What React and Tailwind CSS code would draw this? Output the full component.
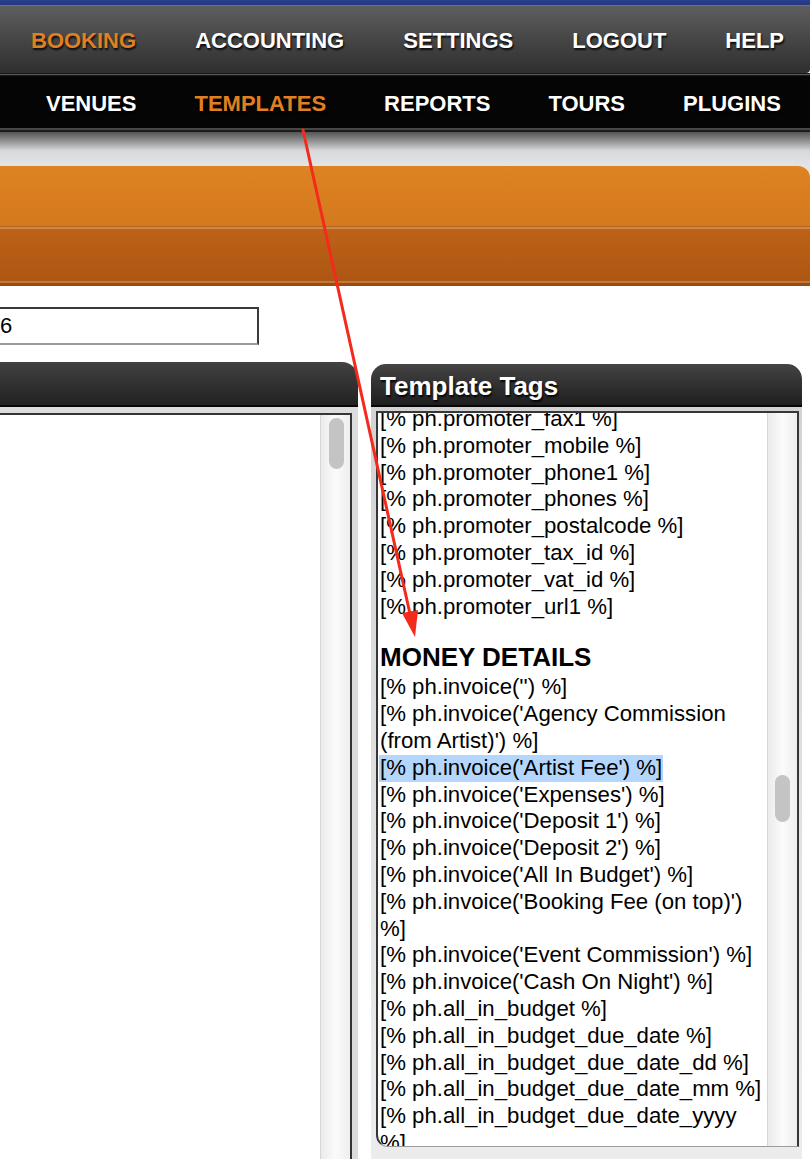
import React from "react";

const topNav = [
  { label: "BOOKING", active: true },
  { label: "ACCOUNTING" },
  { label: "SETTINGS" },
  { label: "LOGOUT" },
  { label: "HELP" },
];

const subNav = [
  { label: "VENUES" },
  { label: "TEMPLATES", active: true },
  { label: "REPORTS" },
  { label: "TOURS" },
  { label: "PLUGINS" },
];

const promoterTags = [
  "[% ph.promoter_fax1 %]",
  "[% ph.promoter_mobile %]",
  "[% ph.promoter_phone1 %]",
  "[% ph.promoter_phones %]",
  "[% ph.promoter_postalcode %]",
  "[% ph.promoter_tax_id %]",
  "[% ph.promoter_vat_id %]",
  "[% ph.promoter_url1 %]",
];

const moneyTags = [
  { t: "[% ph.invoice('') %]" },
  { t: "[% ph.invoice('Agency Commission" },
  { t: "(from Artist)') %]" },
  { t: "[% ph.invoice('Artist Fee') %]", hl: true },
  { t: "[% ph.invoice('Expenses') %]" },
  { t: "[% ph.invoice('Deposit 1') %]" },
  { t: "[% ph.invoice('Deposit 2') %]" },
  { t: "[% ph.invoice('All In Budget') %]" },
  { t: "[% ph.invoice('Booking Fee (on top)')" },
  { t: "%]" },
  { t: "[% ph.invoice('Event Commission') %]" },
  { t: "[% ph.invoice('Cash On Night') %]" },
  { t: "[% ph.all_in_budget %]" },
  { t: "[% ph.all_in_budget_due_date %]" },
  { t: "[% ph.all_in_budget_due_date_dd %]" },
  { t: "[% ph.all_in_budget_due_date_mm %]" },
  { t: "[% ph.all_in_budget_due_date_yyyy" },
  { t: "%]" },
];

function NavItem({ label, active }) {
  return (
    <span
      className={
        "text-[22px] font-bold leading-none whitespace-nowrap [text-shadow:1px_2px_2px_rgba(0,0,0,0.85)] " +
        (active ? "text-[#e08020]" : "text-white")
      }
    >
      {label}
    </span>
  );
}

function ScrollTrack({ thumbTop, thumbHeight, offset }) {
  return (
    <div className="w-[30px] shrink-0 flex flex-col border-l border-[#d6d6d6] bg-linear-to-r from-[#ebebeb] via-[#fbfbfb] to-[#eeeeee]">
      <div
        className="w-[15px] rounded-full bg-[#c4c4c4]"
        style={{ marginTop: thumbTop, height: thumbHeight, marginLeft: offset }}
      />
    </div>
  );
}

export default function App() {
  return (
    <div className="relative w-[810px] h-[1160px] overflow-hidden bg-white font-['Liberation_Sans',Arial,sans-serif]">
      {/* top blue strip */}
      <div className="h-[5px] bg-linear-to-b from-[#2a3f8e] to-[#24397f]" />
      <div className="h-[1px] bg-[#6d7182]" />

      {/* main nav */}
      <div className="h-[67px] flex items-center pt-[2px] pl-[31px] gap-[59px] bg-linear-to-b from-[#5e5e5e] to-[#2f2f2f] rounded-br-[4px]">
        {topNav.map((n) => (
          <NavItem key={n.label} {...n} />
        ))}
      </div>
      <div className="h-[1px] bg-[#1a1a1a]" />
      <div className="h-[1px] bg-[#555555]" />
      <div className="h-[1px] bg-[#1a1a1a]" />

      {/* sub nav */}
      <div className="h-[52px] flex items-center pt-[4px] pl-[46px] gap-[58px] bg-[#050505]">
        {subNav.map((n) => (
          <NavItem key={n.label} {...n} />
        ))}
      </div>
      <div className="h-[2px] bg-[#474747]" />
      <div className="h-[2px] bg-[#1c1c1c]" />

      {/* grey band + orange title bar */}
      <div className="bg-[#e2e3e5]">
        <div className="h-[34px] bg-linear-to-b from-[#555555] via-[#d8d9db] via-55% to-[#e3e4e6]" />
        <div className="rounded-tr-[12px] overflow-hidden">
          <div className="h-[60px] bg-linear-to-b from-[#de8322] to-[#d5791e]" />
          <div className="h-[1px] bg-[#b6631b]" />
          <div className="h-[2px] bg-[#cd884a]" />
          <div className="h-[52px] bg-linear-to-b from-[#bd6217] to-[#ad5713]" />
          <div className="h-[2px] bg-[#c27a3c]" />
          <div className="h-[3px] bg-[#9a4c10]" />
        </div>
      </div>

      {/* input */}
      <div className="mt-[21px] w-[259px] h-[38px] flex items-center border-t-2 border-r-2 border-b-2 border-[#3a3a3a] border-b-[#9a9a9a] bg-white">
        <span className="text-[22px] text-black leading-none">6</span>
      </div>

      {/* panels */}
      <div className="mt-[17px] h-[797px] flex items-start gap-[13px] overflow-hidden">
        {/* left panel */}
        <div className="w-[358px] h-full flex flex-col shrink-0">
          <div className="h-[45px] shrink-0 rounded-tr-[16px] border-b-2 border-[#080808] bg-linear-to-b from-[#424242] to-[#222222]" />
          <div className="flex-1 flex flex-col pt-[6px] pr-[6px] bg-[#dcdcdc]">
            <div className="flex-1 flex justify-end border-t-2 border-r-2 border-[#353535] bg-white">
              <ScrollTrack thumbTop={3} thumbHeight={51} offset={8} />
            </div>
          </div>
        </div>

        {/* right panel */}
        <div className="w-[431px] mt-[2px] flex flex-col shrink-0">
          <div className="h-[43px] shrink-0 flex items-center pt-[3px] pl-[9px] rounded-t-[15px] border-b-2 border-[#080808] bg-linear-to-b from-[#444444] to-[#1f1f1f]">
            <span className="text-[26px] font-bold text-white leading-none [text-shadow:1px_2px_2px_rgba(0,0,0,0.9)]">
              Template Tags
            </span>
          </div>
          <div className="pt-[4px] pl-[5px] pr-[3px] pb-[12px] bg-linear-to-b from-[#d3d3d3] to-[#ececec]">
            <div className="h-[736px] flex border-2 border-[#363636] border-b border-b-[#9c9c9c] rounded-bl-[12px] bg-white overflow-hidden">
              <div className="flex-1 overflow-hidden pl-[2px]">
                <div className="-mt-[7px] text-[22.2px] leading-[26.8px] text-black whitespace-nowrap">
                  {promoterTags.map((t) => (
                    <div key={t}>{t}</div>
                  ))}
                  <div className="mt-[20px] text-[26px] font-bold leading-[34px]">MONEY DETAILS</div>
                  {moneyTags.map((m, i) =>
                    m.hl ? (
                      <div key={i}>
                        <span className="inline-block bg-[#b4d6fd] pr-[1px] -ml-[1px] pl-[1px]">{m.t}</span>
                      </div>
                    ) : (
                      <div key={i}>{m.t}</div>
                    )
                  )}
                </div>
              </div>
              <ScrollTrack thumbTop={362} thumbHeight={47} offset={7} />
            </div>
          </div>
        </div>
      </div>

      {/* red annotation arrow */}
      <svg
        className="absolute left-0 top-0 pointer-events-none"
        width="810"
        height="1160"
        viewBox="0 0 810 1160"
      >
        <line x1="303" y1="130" x2="410" y2="614" stroke="#f42a1c" strokeWidth="3" strokeLinecap="round" />
        <polygon points="415,637 402,613 418,610" fill="#f42a1c" />
      </svg>
    </div>
  );
}
